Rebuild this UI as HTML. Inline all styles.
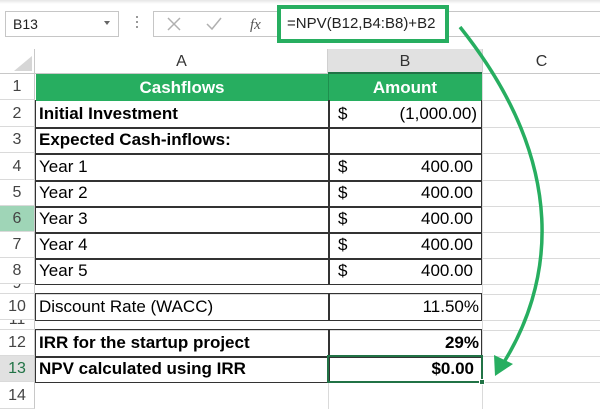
<!DOCTYPE html>
<html><head><meta charset="utf-8"><style>
*{margin:0;padding:0;box-sizing:border-box}
body{width:600px;height:409px;overflow:hidden;background:#fff;font-family:"Liberation Sans",sans-serif;position:relative;color:#000}
.a{position:absolute}
.rh{position:absolute;left:0;width:35px;text-align:center;font-size:16px;color:#444;border-bottom:1px solid #dadada;border-right:1px solid #c8c8c8;background:#fff;overflow:hidden}
.gl{position:absolute;left:35px;width:565px;height:1px;background:#dadada}
.c{position:absolute;font-size:17px;white-space:nowrap;display:flex;align-items:center}
</style></head><body>
<div class="a" style="left:0;top:0;width:600px;height:46px;background:#fff"></div>
<div class="a" style="left:0;top:0;width:600px;height:4px;background:linear-gradient(#e6e6e6,#fff)"></div>
<div class="a" style="left:5px;top:11px;width:114px;height:26px;border:1px solid #c6c6c6;font-size:14px;padding:4px 0 0 7px;color:#222">B13</div>
<div class="a" style="left:104px;top:21px;width:0;height:0;border-left:3.5px solid transparent;border-right:3.5px solid transparent;border-top:4px solid #666"></div>
<div class="a" style="left:136px;top:16px;width:2px;height:14px;background:repeating-linear-gradient(#999 0 2px,transparent 2px 5px)"></div>
<div class="a" style="left:153px;top:11px;width:447px;height:26px;border:1px solid #c6c6c6;border-right:none"></div>
<svg class="a" style="left:160px;top:13px" width="120" height="22">
<path d="M8 5 L20 17 M20 5 L8 17" stroke="#b0b0b0" stroke-width="1.5" fill="none"/>
<path d="M47 11 L52 16 L61 5" stroke="#b0b0b0" stroke-width="1.5" fill="none"/>
<text x="90" y="16" font-family="Liberation Serif" font-style="italic" font-size="15" fill="#555">fx</text>
</svg>
<div class="a" style="left:277px;top:5px;width:172px;height:38px;border:4px solid #27ae60;background:#fff;font-size:15px;padding:6px 0 0 6px;color:#222;white-space:nowrap">=NPV(B12,B4:B8)+B2</div>
<div class="a" style="left:0;top:49px;width:600px;height:25px;background:#fff;border-bottom:1px solid #c8c8c8"></div>
<div class="a" style="left:0;top:49px;width:35px;height:25px;border-right:1px solid #c8c8c8"></div>
<div class="a" style="left:14px;top:56px;width:0;height:0;border-left:18px solid transparent;border-bottom:15px solid #d6d6d6"></div>
<div class="a" style="left:36px;top:49px;width:292px;height:25px;text-align:center;font-size:16px;line-height:26px;color:#333;border-right:1px solid #d0d0d0">A</div>
<div class="a" style="left:328px;top:49px;width:154px;height:25px;text-align:center;font-size:16px;line-height:26px;color:#333;background:#e1e1e1;border-bottom:2px solid #217346">B</div>
<div class="a" style="left:482px;top:49px;width:118px;height:25px;text-align:center;font-size:16px;line-height:26px;color:#333;border-left:1px solid #d0d0d0">C</div>
<div class="a" style="left:482px;top:74px;width:1px;height:335px;background:#dadada"></div>
<div class="a" style="left:328px;top:382px;width:1px;height:27px;background:#dadada"></div>
<div class="gl" style="top:100px"></div><div class="gl" style="top:127px"></div><div class="gl" style="top:153px"></div><div class="gl" style="top:180px"></div><div class="gl" style="top:206px"></div><div class="gl" style="top:232px"></div><div class="gl" style="top:258px"></div><div class="gl" style="top:284px"></div><div class="gl" style="top:294px"></div><div class="gl" style="top:320px"></div><div class="gl" style="top:330px"></div><div class="gl" style="top:356px"></div><div class="gl" style="top:382px"></div>
<div class="rh" style="top:74px;height:26px;line-height:26px">1</div>
<div class="rh" style="top:100px;height:27px;line-height:27px">2</div>
<div class="rh" style="top:127px;height:26px;line-height:26px">3</div>
<div class="rh" style="top:153px;height:27px;line-height:27px">4</div>
<div class="rh" style="top:180px;height:26px;line-height:26px">5</div>
<div class="rh" style="top:206px;height:26px;line-height:26px;background:#9fd5b7">6</div>
<div class="rh" style="top:232px;height:26px;line-height:26px">7</div>
<div class="rh" style="top:258px;height:26px;line-height:26px">8</div>
<div class="rh" style="top:284px;height:10px;line-height:0px">9</div>
<div class="rh" style="top:294px;height:26px;line-height:26px">10</div>
<div class="rh" style="top:320px;height:10px;line-height:0px">11</div>
<div class="rh" style="top:330px;height:26px;line-height:26px">12</div>
<div class="rh" style="top:356px;height:26px;line-height:26px;background:#e1e1e1;color:#217346">13</div>
<div class="rh" style="top:382px;height:27px;line-height:27px">14</div>
<div class="a" style="left:36px;top:74px;width:446px;height:27px;background:#27ae60"></div>
<div class="a" style="left:328px;top:74px;width:1px;height:27px;background:#1e8f4e"></div>
<div class="c" style="left:36px;top:74px;width:292px;height:27px;justify-content:center;color:#fff;font-weight:bold">Cashflows</div>
<div class="c" style="left:328px;top:74px;width:154px;height:27px;justify-content:center;color:#fff;font-weight:bold">Amount</div>
<div class="a" style="left:35px;top:100px;width:447px;height:185px;border:1.5px solid #333;border-top:none"></div>
<div class="a" style="left:328px;top:100px;width:1.5px;height:185px;background:#333"></div>
<div class="a" style="left:35px;top:127px;width:447px;height:1.5px;background:#333"></div>
<div class="a" style="left:35px;top:153px;width:447px;height:1.5px;background:#333"></div>
<div class="a" style="left:35px;top:180px;width:447px;height:1.5px;background:#333"></div>
<div class="a" style="left:35px;top:206px;width:447px;height:1.5px;background:#333"></div>
<div class="a" style="left:35px;top:232px;width:447px;height:1.5px;background:#333"></div>
<div class="a" style="left:35px;top:258px;width:447px;height:1.5px;background:#333"></div>
<div class="c" style="left:39px;top:101px;height:26px;font-weight:bold">Initial Investment</div>
<div class="c" style="left:338px;top:101px;height:26px">$</div>
<div class="c" style="left:329px;top:101px;width:148px;height:26px;justify-content:flex-end">(1,000.00)</div>
<div class="c" style="left:39px;top:127px;height:26px;font-weight:bold">Expected Cash-inflows:</div>
<div class="c" style="left:39px;top:154px;height:26px">Year 1</div>
<div class="c" style="left:39px;top:180px;height:26px">Year 2</div>
<div class="c" style="left:39px;top:206px;height:26px">Year 3</div>
<div class="c" style="left:39px;top:232px;height:26px">Year 4</div>
<div class="c" style="left:39px;top:258px;height:26px">Year 5</div>
<div class="c" style="left:338px;top:154px;height:26px">$</div><div class="c" style="left:329px;top:154px;width:144px;height:26px;justify-content:flex-end">400.00</div>
<div class="c" style="left:338px;top:180px;height:26px">$</div><div class="c" style="left:329px;top:180px;width:144px;height:26px;justify-content:flex-end">400.00</div>
<div class="c" style="left:338px;top:206px;height:26px">$</div><div class="c" style="left:329px;top:206px;width:144px;height:26px;justify-content:flex-end">400.00</div>
<div class="c" style="left:338px;top:232px;height:26px">$</div><div class="c" style="left:329px;top:232px;width:144px;height:26px;justify-content:flex-end">400.00</div>
<div class="c" style="left:338px;top:258px;height:26px">$</div><div class="c" style="left:329px;top:258px;width:144px;height:26px;justify-content:flex-end">400.00</div>
<div class="a" style="left:35px;top:293px;width:447px;height:28px;border:1.5px solid #333"></div>
<div class="a" style="left:328px;top:293px;width:1.5px;height:28px;background:#333"></div>
<div class="c" style="left:39px;top:294px;height:26px">Discount Rate (WACC)</div>
<div class="c" style="left:329px;top:294px;width:150px;height:26px;justify-content:flex-end">11.50%</div>
<div class="a" style="left:35px;top:329px;width:447px;height:54px;border:1.5px solid #333"></div>
<div class="a" style="left:328px;top:329px;width:1.5px;height:54px;background:#333"></div>
<div class="a" style="left:35px;top:356px;width:447px;height:1.5px;background:#333"></div>
<div class="c" style="left:39px;top:330px;height:26px;font-weight:bold">IRR for the startup project</div>
<div class="c" style="left:329px;top:330px;width:150px;height:26px;justify-content:flex-end;font-weight:bold">29%</div>
<div class="c" style="left:39px;top:356px;height:26px;font-weight:bold">NPV calculated using IRR</div>
<div class="a" style="left:327px;top:355px;width:156px;height:28px;border:2px solid #217346"></div>
<div class="a" style="left:479px;top:379px;width:6px;height:6px;background:#217346;border:1px solid #fff"></div>
<div class="c" style="left:329px;top:356px;width:145px;height:26px;justify-content:flex-end;font-weight:bold">$0.00</div>
<svg class="a" style="left:0;top:0" width="600" height="409">
<path d="M460 27 C 570 165 555 285 499 370" stroke="#27ae60" stroke-width="3.5" fill="none"/>
<path d="M495 376 L494 355 L513 364 Z" fill="#27ae60"/>
</svg>
</body></html>
